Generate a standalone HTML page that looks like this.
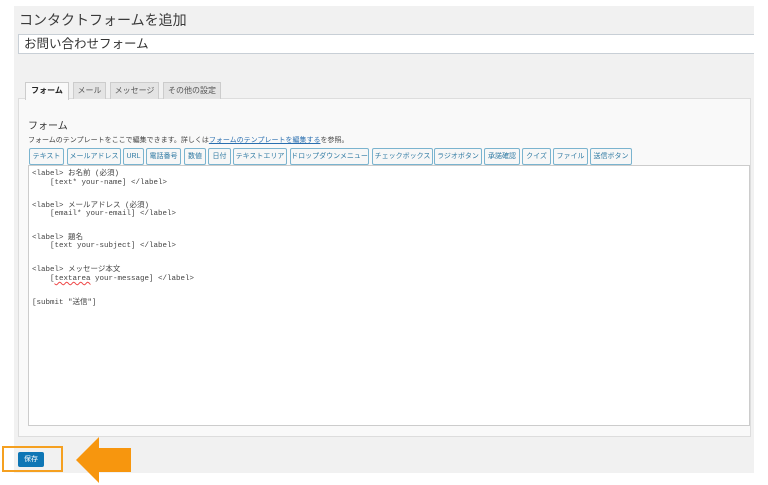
<!DOCTYPE html>
<html><head><meta charset="utf-8"><style>
*{margin:0;padding:0;box-sizing:border-box}
body{width:768px;height:485px;background:#fff;position:relative;overflow:hidden;font-family:"Liberation Sans","Noto Sans CJK JP",sans-serif;color:#333}
.a{position:absolute}
#bg{left:14px;top:6px;width:740px;height:467px;background:#f1f1f1}
.tab{position:absolute;top:82px;height:17px;background:#e4e4e4;border:1px solid #ccc;border-bottom:none;font-size:8px;color:#555;text-align:center;line-height:16px}
.btn{position:absolute;top:148px;height:17px;border:1px solid #7bb4cf;border-radius:2px;background:#f7f7f7;font-size:7px;color:#2f7aa3;text-align:center;line-height:15px}
.code{position:absolute;left:32px;font-family:"Liberation Mono","Noto Sans CJK JP",monospace;font-size:7.5px;color:#444;white-space:pre}
</style></head><body>
<div id="bg" class="a"></div>
<div class="a" style="left:19px;top:10px;font-size:14px;color:#3a3a3a">コンタクトフォームを追加</div>
<div class="a" style="left:18px;top:34px;width:736px;height:20px;background:#fff;border:1px solid #c8cfd6;border-right:none;font-size:12.5px;line-height:18px;padding-left:5px;color:#333">お問い合わせフォーム</div>
<div class="a" style="left:18px;top:98px;width:733px;height:339px;background:#f9f9f9;border:1px solid #ddd"></div>
<div class="tab" style="left:25px;width:44px;background:#f9f9f9;color:#222;font-weight:bold;height:18px">フォーム</div>
<div class="tab" style="left:73px;width:33px">メール</div>
<div class="tab" style="left:110px;width:49px">メッセージ</div>
<div class="tab" style="left:163px;width:58px">その他の設定</div>
<div class="a" style="left:28px;top:117px;font-size:10px;color:#333">フォーム</div>
<div class="a" style="left:28px;top:135px;font-size:7px;color:#444">フォームのテンプレートをここで編集できます。詳しくは<span style="color:#2a6fb0;text-decoration:underline">フォームのテンプレートを編集する</span>を参照。</div>
<div class="btn" style="left:29px;width:35px">テキスト</div>
<div class="btn" style="left:67px;width:54px">メールアドレス</div>
<div class="btn" style="left:123px;width:21px">URL</div>
<div class="btn" style="left:146px;width:35px">電話番号</div>
<div class="btn" style="left:184px;width:22px">数値</div>
<div class="btn" style="left:208px;width:23px">日付</div>
<div class="btn" style="left:233px;width:54px">テキストエリア</div>
<div class="btn" style="left:290px;width:79px">ドロップダウンメニュー</div>
<div class="btn" style="left:372px;width:61px">チェックボックス</div>
<div class="btn" style="left:434px;width:48px">ラジオボタン</div>
<div class="btn" style="left:484px;width:36px">承諾確認</div>
<div class="btn" style="left:522px;width:29px">クイズ</div>
<div class="btn" style="left:553px;width:35px">ファイル</div>
<div class="btn" style="left:590px;width:42px">送信ボタン</div>
<div class="a" style="left:28px;top:165px;width:722px;height:261px;background:#fff;border:1px solid #ccc"></div>
<div class="code" style="top:167px">&lt;label&gt; お名前 (必須)</div>
<div class="code" style="top:179px">    [text* your-name] &lt;/label&gt;</div>
<div class="code" style="top:199px">&lt;label&gt; メールアドレス (必須)</div>
<div class="code" style="top:210px">    [email* your-email] &lt;/label&gt;</div>
<div class="code" style="top:231px">&lt;label&gt; 題名</div>
<div class="code" style="top:242px">    [text your-subject] &lt;/label&gt;</div>
<div class="code" style="top:263px">&lt;label&gt; メッセージ本文</div>
<div class="code" style="top:275px">    [<span style="text-decoration:underline wavy #e44">textarea</span> your-message] &lt;/label&gt;</div>
<div class="code" style="top:296px">[submit "送信"]</div>
<div class="a" style="left:2px;top:446px;width:61px;height:26px;border:2px solid #f5a020"></div>
<div class="a" style="left:18px;top:452px;width:26px;height:15px;background:#0e76b5;border-radius:2px;color:#fff;font-size:7px;text-align:center;line-height:15px">保存</div>
<svg class="a" style="left:74px;top:436px" width="58" height="48"><polygon points="2,24 25,1 25,12 57,12 57,36 25,36 25,47" fill="#f7960e"/></svg>
</body></html>
